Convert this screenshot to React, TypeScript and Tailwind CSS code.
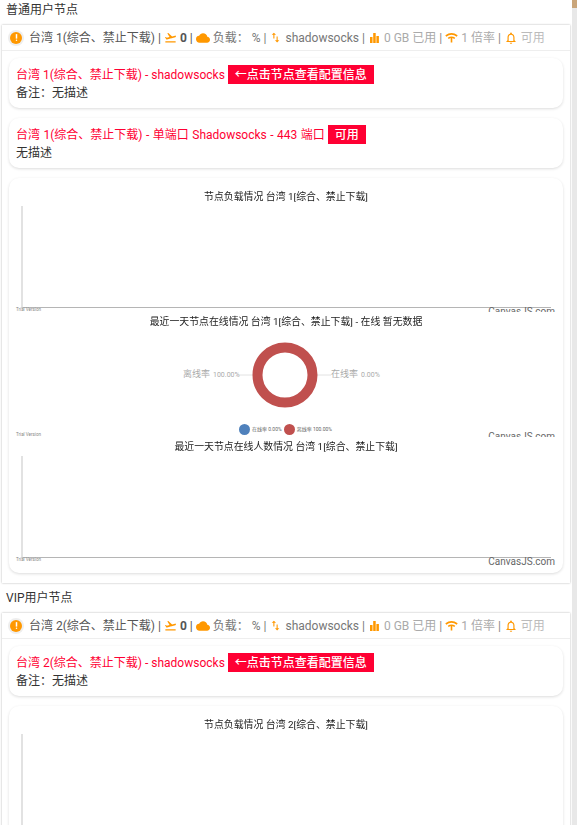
import { MdCloud, MdFlightTakeoff, MdNotificationsNone, MdPriorityHigh, MdSwapVert } from "react-icons/md";

const red = "bg-[#ff0033] text-white";

function NodeHeader({ name }: { name: string }) {
  return (
    <div className="flex h-[26px] items-center whitespace-nowrap border-b border-[#eeeeee] pl-[8px] text-[12px] text-[#555555]">
      <span className="mr-[7px] flex h-[12px] w-[12px] items-center justify-center rounded-full bg-[#ff9800] ring-2 ring-[#eeeeee]">
        <MdPriorityHigh size={9} className="text-white" />
      </span>
      <span>{name}(综合、禁止下载) | </span>
      <MdFlightTakeoff size={13} className="mx-[3px] text-[#ff9800]" />
      <b>0</b>
      <span className="mx-[3px]">|</span>
      <MdCloud size={14} className="mr-[3px] text-[#ff9800]" />
      <span className="text-[#777777]">负载： % |</span>
      <MdSwapVert size={13} className="mx-[3px] text-[#ff9800]" />
      <span className="text-[#777777]">shadowsocks |</span>
      <svg width="13" height="13" viewBox="0 0 13 13" className="mx-[3px] text-[#ff9800]" fill="currentColor">
        <rect x="2" y="6" width="2.5" height="6" />
        <rect x="5.2" y="2" width="2.5" height="10" />
        <rect x="8.4" y="5" width="2.5" height="7" />
      </svg>
      <span className="text-[#aaaaaa]">0 GB 已用 <span className="text-[#888888]">|</span></span>
      <svg width="13" height="13" viewBox="0 0 13 13" className="mx-[3px] text-[#ff9800]" fill="none" stroke="currentColor" strokeWidth="1.6">
        <path d="M0.8 5 Q6.5 0.8 12.2 5" />
        <path d="M3.2 7.4 Q6.5 5 9.8 7.4" />
        <path d="M6.5 7 V11.5" />
      </svg>
      <span className="text-[#aaaaaa]">1 倍率 <span className="text-[#888888]">|</span></span>
      <MdNotificationsNone size={14} className="mx-[3px] text-[#ff9800]" />
      <span className="text-[#bbbbbb]">可用</span>
    </div>
  );
}

function LinkCard({ title, badge, note, titleClass = "" }: { title: string; badge: string; note: string; titleClass?: string }) {
  return (
    <div className="h-[50px] rounded-[10px] px-[7px] pt-[7px] text-[12px] shadow-[0_1px_3px_rgba(0,0,0,0.14)]">
      <div className="flex h-[19px] items-center whitespace-nowrap text-[#ff0033]">
        <span className={titleClass}>{title}</span>
        <span className={`ml-[3px] flex h-[19px] items-center px-[7px] text-[12px] font-medium ${red}`}>{badge}</span>
      </div>
      <p className="leading-[18px] text-[#333333]">{note}</p>
    </div>
  );
}

function ChartFrame({ title, height = 125 }: { title: string; height?: number }) {
  return (
    <div className="relative overflow-hidden" style={{ height }}>
      <p className="pt-[3px] text-center text-[9.9px] leading-[14px] text-[#222222] blur-[0.25px]">{title}</p>
      <div className="absolute left-[12px] top-[19px] h-[102px] w-[530px] border-b border-l-2 border-b-[#b5b5b5] border-l-[#e2e2e2]" />
      <span className="absolute left-[7px] top-[120px] text-[4.5px] leading-[5px] text-[#888888]">Trial Version</span>
      <span className="absolute right-[8px] top-[118px] text-[10px] leading-[14px] text-[#666666]">CanvasJS.com</span>
    </div>
  );
}

function DonutFrame({ title }: { title: string }) {
  return (
    <div className="relative h-[125px] overflow-hidden">
      <p className="pt-[3px] text-center text-[9.9px] leading-[14px] text-[#222222] blur-[0.25px]">{title}</p>
      <svg className="absolute left-[170px] top-[30px]" width="200" height="70" viewBox="0 0 200 70">
        <line x1="59" y1="33" x2="75" y2="33" stroke="#e2e2e2" />
        <line x1="137" y1="33" x2="152" y2="33" stroke="#e2e2e2" />
        <circle cx="106" cy="33" r="27.5" fill="none" stroke="#c0504e" strokeWidth="10" />
      </svg>
      <span className="absolute left-[174px] top-[56px] whitespace-nowrap leading-[10px] text-[#aaaaaa]">
        <span className="text-[9px]">离线率</span> <span className="text-[7px]">100.00%</span>
      </span>
      <span className="absolute left-[322px] top-[56px] whitespace-nowrap leading-[10px] text-[#aaaaaa]">
        <span className="text-[9px]">在线率</span> <span className="text-[7px]">0.00%</span>
      </span>
      <div className="absolute left-[230px] top-[112px] flex items-center whitespace-nowrap text-[5px] text-[#666666]">
        <span className="h-[11px] w-[11px] rounded-full bg-[#4f81bc]" />
        <span className="ml-[2px]">在线率 0.00%</span>
        <span className="ml-[2px] h-[11px] w-[11px] rounded-full bg-[#c0504e]" />
        <span className="ml-[2px]">离线率 100.00%</span>
      </div>
      <span className="absolute left-[7px] top-[120px] text-[4.5px] leading-[5px] text-[#888888]">Trial Version</span>
      <span className="absolute right-[8px] top-[118px] text-[10px] leading-[14px] text-[#666666]">CanvasJS.com</span>
    </div>
  );
}

export default function App() {
  return (
    <div className="h-[825px] overflow-hidden bg-white font-['Roboto','Noto_Sans_CJK_SC',sans-serif] text-[12px]">
      <div className="flex">
        <div className="w-[572px] shrink-0">
          <h2 className="h-[25px] pl-[6px] pt-[2px] text-[12px] font-normal leading-[16px] text-[#333333]">普通用户节点</h2>
          <section className="ml-[2px] w-[568px] bg-white shadow-[0_0_2px_rgba(0,0,0,0.3)]">
            <NodeHeader name="台湾 1" />
            <div className="flex flex-col gap-[10px] px-[7px] pb-[10px] pt-[7px]">
              <LinkCard title="台湾 1(综合、禁止下载) - shadowsocks" badge="←点击节点查看配置信息" note="备注：无描述" />
              <LinkCard title="台湾 1(综合、禁止下载) - 单端口 Shadowsocks - 443 端口" badge="可用" note="无描述" titleClass="[word-spacing:0.5px]" />
              <div className="h-[395px] rounded-[10px] pt-[9px] shadow-[0_1px_3px_rgba(0,0,0,0.14)]">
                <ChartFrame title="节点负载情况 台湾 1[综合、禁止下载]" />
                <DonutFrame title="最近一天节点在线情况 台湾 1[综合、禁止下载] - 在线 暂无数据" />
                <ChartFrame title="最近一天节点在线人数情况 台湾 1[综合、禁止下载]" height={136} />
              </div>
            </div>
          </section>
          <h2 className="h-[30px] pl-[6px] pt-[7px] text-[12px] font-normal leading-[16px] text-[#333333]">VIP用户节点</h2>
          <section className="ml-[2px] w-[568px] bg-white shadow-[0_0_2px_rgba(0,0,0,0.3)]">
            <NodeHeader name="台湾 2" />
            <div className="flex flex-col gap-[10px] px-[7px] pt-[7px]">
              <LinkCard title="台湾 2(综合、禁止下载) - shadowsocks" badge="←点击节点查看配置信息" note="备注：无描述" />
              <div className="h-[395px] rounded-[10px] pt-[9px] shadow-[0_1px_3px_rgba(0,0,0,0.14)]">
                <ChartFrame title="节点负载情况 台湾 2[综合、禁止下载]" />
              </div>
            </div>
          </section>
        </div>
        <div className="flex h-[825px] w-[5px] flex-col bg-[#e8e8e8]">
          <div className="h-[8px] bg-[#c9a57a]" />
        </div>
      </div>
    </div>
  );
}
